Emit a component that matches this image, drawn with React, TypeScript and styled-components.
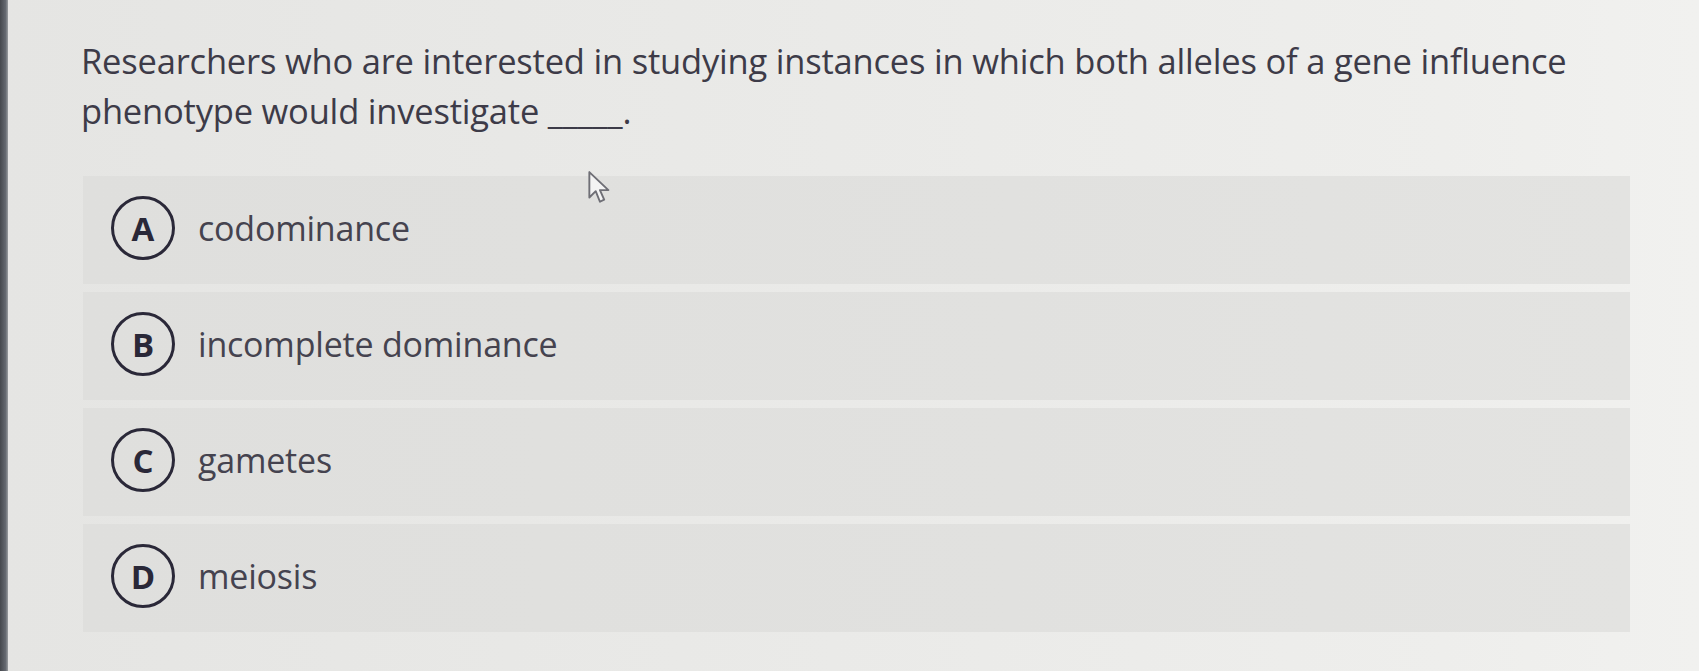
import React from "react";
import styled, { createGlobalStyle } from "styled-components";

const GlobalStyle = createGlobalStyle`
  html, body {
    margin: 0;
    padding: 0;
    background: #e9e9e7;
  }
  body {
    font-family: "Open Sans", "Noto Sans", sans-serif;
  }
`;

const Screen = styled.div`
  position: relative;
  display: flex;
  width: 1699px;
  height: 671px;
  overflow: hidden;
  background: linear-gradient(90deg, #e5e5e3 0%, #e9e9e7 40%, #eeeeec 85%, #f1f1ef 100%);
`;

const Bezel = styled.div`
  width: 8px;
  flex: none;
  background: linear-gradient(90deg, #45484d 0%, #656970 70%, #9a9da0 100%);
`;

const Content = styled.main`
  flex: 1;
  padding: 36px 0 0 73px;
`;

const Question = styled.p`
  margin: 0;
  max-width: 1535px;
  font-size: 34.5px;
  line-height: 50px;
  color: #3d3b48;
  letter-spacing: -0.2px;
`;

const Options = styled.ul`
  list-style: none;
  margin: 40px 0 0 2px;
  padding: 0;
  width: 1547px;
  display: flex;
  flex-direction: column;
  gap: 8px;
`;

const Option = styled.li`
  display: flex;
  align-items: center;
  height: 108px;
  padding: 0 0 4px 28px;
  box-sizing: border-box;
  gap: 23px;
  background: linear-gradient(90deg, #dfdfdd 0%, #e1e1df 60%, #e3e3e1 100%);
`;

const Letter = styled.span`
  width: 64px;
  height: 64px;
  flex: none;
  box-sizing: border-box;
  border: 3px solid #2a2838;
  border-radius: 50%;
  display: flex;
  align-items: center;
  justify-content: center;
  font-size: 33px;
  font-weight: 700;
  color: #2a2838;
`;

const Answer = styled.span`
  font-size: 34px;
  color: #45434f;
  letter-spacing: -0.2px;
`;

const Cursor = styled.svg`
  position: absolute;
  left: 587px;
  top: 170px;
  width: 28px;
  height: 36px;
`;

const choices = [
  { key: "A", text: "codominance" },
  { key: "B", text: "incomplete dominance" },
  { key: "C", text: "gametes" },
  { key: "D", text: "meiosis" },
];

export default function App() {
  return (
    <>
      <GlobalStyle />
      <Screen>
        <Bezel />
        <Content>
          <Question>
            Researchers who are interested in studying instances in which both alleles of a gene influence phenotype
            would investigate _____.
          </Question>
          <Options>
            {choices.map((c) => (
              <Option key={c.key}>
                <Letter>{c.key}</Letter>
                <Answer>{c.text}</Answer>
              </Option>
            ))}
          </Options>
        </Content>
        <Cursor viewBox="0 0 26 34">
          <path
            d="M2 2 L2 26 L8 20 L12 30 L16 28 L12 19 L20 19 Z"
            fill="#f4f4f4"
            stroke="#6f6f76"
            strokeWidth="1.8"
            strokeLinejoin="round"
          />
        </Cursor>
      </Screen>
    </>
  );
}
